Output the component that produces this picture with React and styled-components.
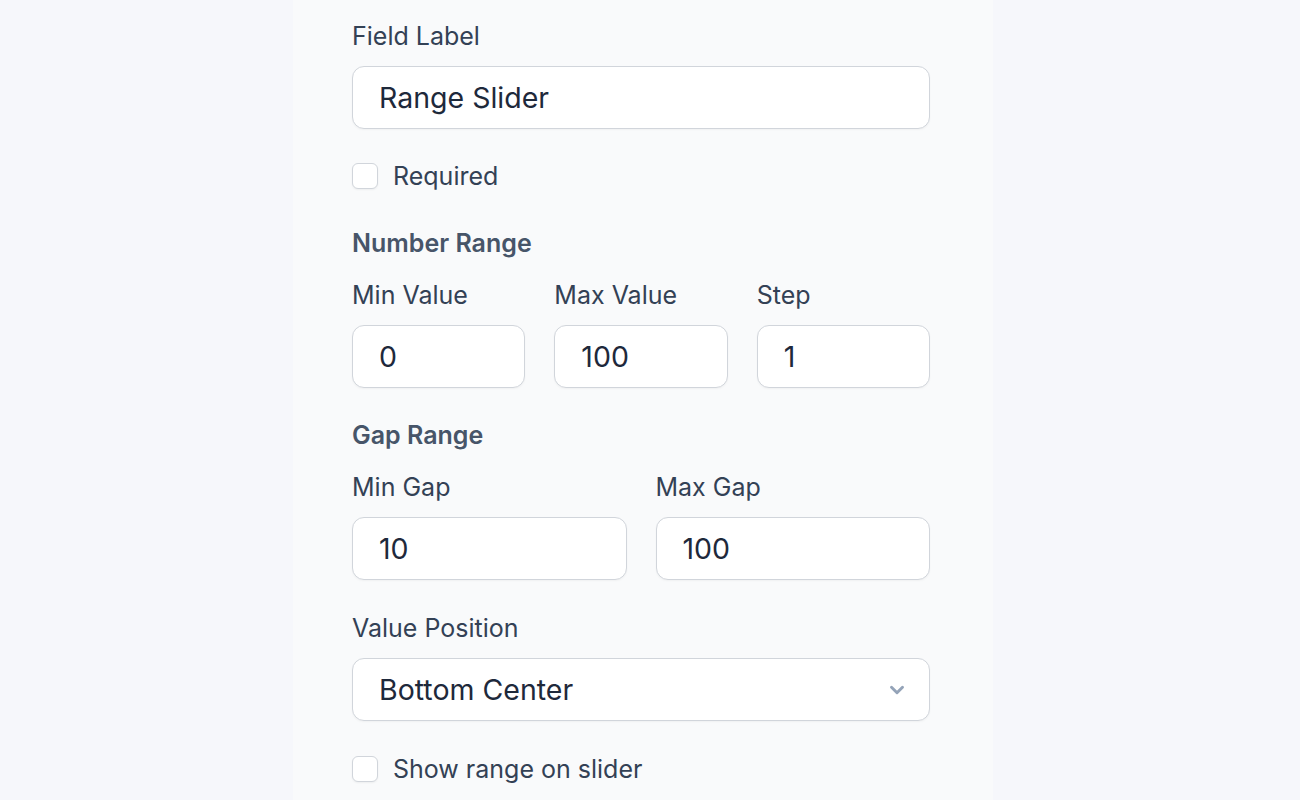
import React from 'react'
import styled, { createGlobalStyle } from 'styled-components'
import { ChevronDown } from 'lucide-react'

const Global = createGlobalStyle`
  html, body {
    margin: 0;
    padding: 0;
    background: #f6f7fb;
    font-family: Inter, "Noto Sans", sans-serif;
  }
`

const Page = styled.div`
  display: grid;
  grid-template-columns: 293px 700px 1fr;
  min-height: 800px;
`

const Panel = styled.div`
  grid-column: 2;
  background: #f9fafb;
  padding: 20px 63px 20px 59px;
  display: flex;
  flex-direction: column;
`

const Section = styled.div`
  display: flex;
  flex-direction: column;
  margin-top: ${(p) => p.$top || 0}px;
`

const Label = styled.label`
  font-size: 25px;
  line-height: 32px;
  color: #334155;
  margin-bottom: 14px;
`

const Heading = styled.div`
  font-size: 25px;
  line-height: 32px;
  font-weight: 600;
  color: #475569;
  margin-bottom: 20px;
`

const Input = styled.div`
  box-sizing: border-box;
  height: 63px;
  background: #fff;
  border: 1px solid #d1d5db;
  border-radius: 12px;
  box-shadow: 0 1px 2px rgba(0, 0, 0, 0.04);
  padding: 0 26px;
  display: flex;
  align-items: center;
  justify-content: space-between;
  font-size: 28.5px;
  color: #1e293b;
`

const Grid = styled.div`
  display: grid;
  grid-template-columns: repeat(${(p) => p.$cols}, 1fr);
  column-gap: 29px;
`

const Field = styled.div`
  display: flex;
  flex-direction: column;
`

const CheckRow = styled.label`
  display: flex;
  align-items: center;
  gap: 15px;
  height: 32px;
  font-size: 25px;
  color: #334155;
`

const Box = styled.span`
  box-sizing: border-box;
  width: 26px;
  height: 26px;
  background: #fff;
  border: 1px solid #d1d5db;
  border-radius: 6px;
  box-shadow: 0 1px 2px rgba(0, 0, 0, 0.05);
`

const Chevron = styled(ChevronDown)`
  color: #94a3b8;
  margin-right: -5px;
`

const SmallField = ({ label, value }) => (
  <Field>
    <Label>{label}</Label>
    <Input>{value}</Input>
  </Field>
)

export default function App() {
  return (
    <>
      <Global />
      <Page>
        <Panel>
          <Section>
            <Label>Field Label</Label>
            <Input>Range Slider</Input>
          </Section>

          <Section $top={31}>
            <CheckRow>
              <Box />
              Required
            </CheckRow>
          </Section>

          <Section $top={35}>
            <Heading>Number Range</Heading>
            <Grid $cols={3}>
              <SmallField label="Min Value" value="0" />
              <SmallField label="Max Value" value="100" />
              <SmallField label="Step" value="1" />
            </Grid>
          </Section>

          <Section $top={31}>
            <Heading>Gap Range</Heading>
            <Grid $cols={2}>
              <SmallField label="Min Gap" value="10" />
              <SmallField label="Max Gap" value="100" />
            </Grid>
          </Section>

          <Section $top={32}>
            <Label>Value Position</Label>
            <Input>
              Bottom Center
              <Chevron size={22} strokeWidth={3.2} />
            </Input>
          </Section>

          <Section $top={32}>
            <CheckRow>
              <Box />
              Show range on slider
            </CheckRow>
          </Section>
        </Panel>
      </Page>
    </>
  )
}
